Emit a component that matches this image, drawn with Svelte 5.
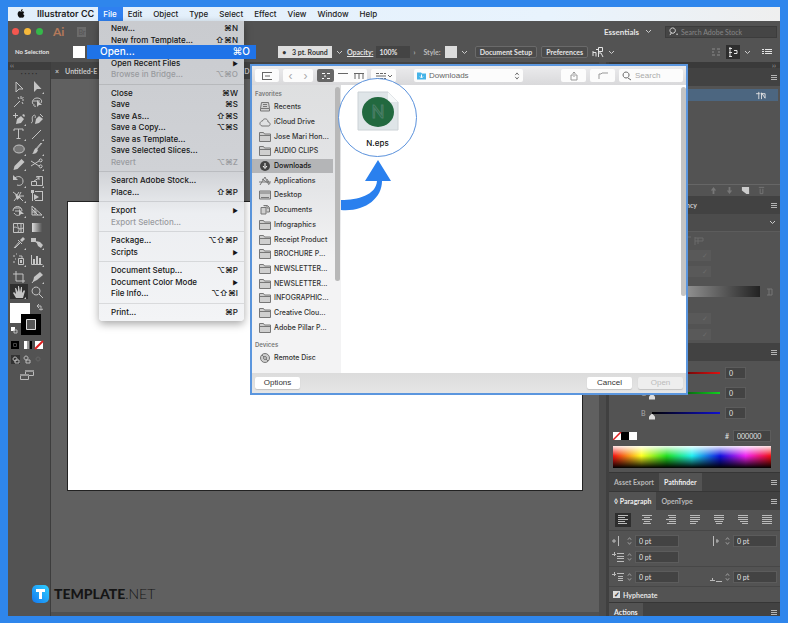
<script>
    let query = "";
    let stock = "";
    let hyphenate = true;
    let folder = "Downloads";

    const menus = ["File", "Edit", "Object", "Type", "Select", "Effect", "View", "Window", "Help"];

    const fileMenu = [
        { label: "New...", keys: "⌘N" },
        { label: "New from Template...", keys: "⇧⌘N" },
        { label: "Open...", keys: "⌘O", active: true },
        { label: "Open Recent Files", sub: true },
        { label: "Browse in Bridge...", keys: "⌥⌘O", off: true },
        null,
        { label: "Close", keys: "⌘W" },
        { label: "Save", keys: "⌘S" },
        { label: "Save As...", keys: "⇧⌘S" },
        { label: "Save a Copy...", keys: "⌥⌘S" },
        { label: "Save as Template..." },
        { label: "Save Selected Slices..." },
        { label: "Revert", keys: "⌥⌘Z", off: true },
        null,
        { label: "Search Adobe Stock..." },
        { label: "Place...", keys: "⇧⌘P" },
        null,
        { label: "Export", sub: true },
        { label: "Export Selection...", off: true },
        null,
        { label: "Package...", keys: "⌥⇧⌘P" },
        { label: "Scripts", sub: true },
        null,
        { label: "Document Setup...", keys: "⌥⌘P" },
        { label: "Document Color Mode", sub: true },
        { label: "File Info...", keys: "⌥⇧⌘I" },
        null,
        { label: "Print...", keys: "⌘P" },
    ];

    // s = stroked path, f = filled path, on a 14x14 grid
    const tools = [
        [
            { name: "Selection", s: "M4 2v10l3-3 4 0z" },
            { name: "Direct selection", f: "M4 1v11l3-3 4.500 0z", more: true },
            { name: "Magic wand", s: "M2 12l6-6M9 1v3M12 5h-2M6 2l1 2M11 9l-1-2M11.500 2l-2 2" },
            { name: "Lasso", s: "M3 9c-2-3 1-6 4-6s6 2 4 5M3 6h7M4 9c-1 2 1 3 2 2", f: "M7 5v7l2-2h3z" },
        ],
        [
            { name: "Pen", f: "M4 12l1-5 4-3 3 3-3 4zM1 3h2V1h1v2h2v1H4v2H3V4H1zM10 3l2-1 1 2-1 1z", more: true },
            { name: "Curvature", f: "M5 12l1-5 3-3 4 3-4 4z", s: "M1 11c3-1 0-5 2-7s3 0 2 2M10 2l3 3" },
            { name: "Type", s: "M2 4V2h9v2M6.500 2v9M4.500 11.500h4", more: true },
            { name: "Line", s: "M2 12L11 3", more: true },
            { name: "Ellipse", s: "M7 3c7 0 7 8 0 8s-7-8 0-8z", g: true, more: true },
            { name: "Paintbrush", s: "M12 1L6 8M11 1L5 8", f: "M6 6l2 2c-1 3-3 4-6 4 2-1 1-4 4-6z", more: true },
            { name: "Pencil", f: "M1.500 13l1-4 7-7 3 3-7 7z", more: true },
            { name: "Scissors", s: "M1 4l8 5M1 9l8-5M10 2a1.500 1.500 0 1 0 2 2 1.500 1.500 0 0 0-2-2M10 8a1.500 1.500 0 1 0 2 2 1.500 1.500 0 0 0-2-2", more: true },
        ],
        [
            { name: "Rotate", s: "M3 4c3-3 8-1 8 3s-3 5-6 4", f: "M1 1v5h5z", more: true },
            { name: "Scale", s: "M1.500 7.500h5v4h-5zM6.500 2.500h6v9h-6M4 7l5-3M6 3h3v3", more: true },
            { name: "Width", s: "M1 3l4 3 2-3M2 12l4-5 5 5M9 3l-2 4 5 0", f: "M3 5l6 3-4 3z", more: true },
            { name: "Free transform", s: "M5 2.500h8M12.500 2v10M5 11.500h8", f: "M1 1h3v3H3v8H2V4H1zM4 5v6l5-3z" },
            { name: "Shape builder", s: "M1 7c0-6 9-6 9 0M2 4h7M2 9c2 3 5 3 6 1M3 7h4", f: "M7 5v7l2-2h3z", more: true },
            { name: "Perspective grid", s: "M2 2v9h10zM2 5l6 6M2 8h5M5 4v7", more: true },
        ],
        [
            { name: "Mesh", s: "M1.500 2.500h10v9h-10zM1 7c4-3 5 3 10 0M6 2c-2 4 3 5 0 9M9 3v8" },
            { name: "Gradient", grad: true },
            { name: "Eyedropper", s: "M8 5l-6 7M6 4l4 4M9 6l-6 6", f: "M8 4l3-3 2 2-3 3z", more: true },
            { name: "Blend", f: "M1 2h5v4H1zM6 5l4 1 3 3-2 3-3-2z", s: "M3 4l6 4", more: true },
        ],
        [
            { name: "Symbol sprayer", s: "M6.500 5.500h5v6h-5zM7 3h3v2M1 3h2M3 6h1M1 9h2M4 1h1", f: "M8 7h2v3H8z", more: true },
            { name: "Column graph", s: "M1.500 2v9.500h11", f: "M3 6h2v5H3zM6 3h2v8H6zM9 5h2v6H9z", more: true },
        ],
        [
            { name: "Artboard", s: "M4 1v10h9M1 4h10v9" },
            { name: "Slice", f: "M3 12l1-5 6-5 3 3-6 5z", s: "M2 13l3-4", more: true },
            { name: "Hand", f: "M4 13L1 8l1-1 2 2-1-6h1l2 4V1h1l1 6 1-5h1v6l2-3 1 1-2 7z", on: true, more: true },
            { name: "Zoom", s: "M6 2a4 4 0 1 0 .1 0M9 9l4 4" },
        ],
    ];

    const favorites = [
        ["recents", "Recents"],
        ["cloud", "iCloud Drive"],
        ["folder", "Jose Mari Hon..."],
        ["folder", "AUDIO CLIPS"],
        ["down", "Downloads"],
        ["apps", "Applications"],
        ["desktop", "Desktop"],
        ["docs", "Documents"],
        ["folder", "Infographics"],
        ["folder", "Receipt Product"],
        ["folder", "BROCHURE P..."],
        ["folder", "NEWSLETTER..."],
        ["folder", "NEWSLETTER..."],
        ["folder", "INFOGRAPHIC..."],
        ["folder", "Creative Clou..."],
        ["folder", "Adobe Pillar P..."],
    ];

    const channels = [
        { id: "R", color: "#e01010", value: 0 },
        { id: "G", color: "#10d020", value: 0 },
        { id: "B", color: "#1010d0", value: 0 },
    ];

    const aligns = [
        "M0 1h10M0 3h7M0 5h10M0 7h7M0 9h9",
        "M0 1h10M2 3h6M0 5h10M2 7h6M1 9h8",
        "M2 1h8M3 3h7M0 5h10M3 7h7M1 9h9",
        "M0 1h10M0 3h10M0 5h10M0 7h8M0 9h6",
        "M0 1h10M0 3h10M0 5h10M1 7h8M2 9h6",
        "M0 1h10M0 3h10M0 5h10M2 7h8M4 9h6",
        "M0 1h10M0 3h10M0 5h10M0 7h10M0 9h10",
    ];
</script>

{#snippet chevron()}
    <svg class="chev" viewBox="0 0 7 5"><path d="M1 1l2.500 2.500L6 1" /></svg>
{/snippet}

{#snippet burger()}
    <button class="burger" aria-label="Panel menu"></button>
{/snippet}

{#snippet sideIcon(kind)}
    <svg class="side-icon" viewBox="0 0 12 10">
        {#if kind === "folder"}
            <path class="tint" d="M.5 9.500v-9h4l1 1.500h6v7.500zM.5 3.500h11" />
        {:else if kind === "recents"}
            <path class="tint" d="M2.500.5h7l1 6V9h-9V6.500zM1.500 6.500h9M4 2.500h4M4 4.500h4" />
        {:else if kind === "cloud"}
            <path d="M3 9h7c2-1 1-4-1-4 0-4-5-4-5.500-1C1 4-.5 8 3 9z" />
        {:else if kind === "down"}
            <circle class="solid" cx="6" cy="5" r="5" /><path class="white" d="M6 2v4M4 5l2 2.500L8 5" />
        {:else if kind === "apps"}
            <path d="M1 9l5-8 4 8M0 6h12M3 3l6 4M8 3l3 5" />
        {:else if kind === "desktop"}
            <path class="tint" d="M.5 1h11v8H.5zM.5 3h11M2 7.500h8" />
        {:else if kind === "docs"}
            <path class="tint" d="M2 2.500h5V9H2zM4.500.5h4l2 2V7h-3M8 1v2h2" />
        {:else}
            <circle class="tint" cx="6" cy="5" r="4.500" /><circle cx="6" cy="5" r="1.500" /><path d="M3 2l2 2M7 6l2 2" />
        {/if}
    </svg>
{/snippet}

{#snippet measure(icon, label)}
    <label class="measure">
        <svg class="measure-icon" viewBox="0 0 12 10"><path d={icon} /></svg>
        <svg class="step" viewBox="0 0 6 10"><path d="M1 3.500L3 1l2 2.500M1 6.500L3 9l2-2.500" /></svg>
        <input class="field" aria-label={label} value="0 pt" />
    </label>
{/snippet}

<div class="frame">
    <nav class="menubar">
        <svg class="apple" viewBox="0 0 10 11">
            <path d="M7 0C5.500.2 4.800 1.300 5 2.600 6.300 2.600 7.200 1.300 7 0zM5 3.200C3.800 2.600 2.800 2.500 1.800 3.300 0 5 .8 9 2.800 10.600c.8.5 1.500-.2 2.400-.2s1.600.7 2.400.2c.8-.6 1.500-1.800 1.700-2.600C7.500 7 7.600 4.800 9 4 8 2.600 6.500 2.600 5 3.200z" />
        </svg>
        <button class="app-name">Illustrator CC</button>
        {#each menus as m}
            <button class:open={m === "File"}>{m}</button>
        {/each}
    </nav>

    <header class="titlebar">
        <button class="light red" aria-label="Close window"></button>
        <button class="light yellow" aria-label="Minimise"></button>
        <button class="light green" aria-label="Zoom window"></button>
        <span class="ai">Ai</span>
        <span class="bridge">Br</span>
        <button class="workspace">Essentials {@render chevron()}</button>
        <label class="stock">
            <svg viewBox="0 0 10 10"><path d="M4 1a3 3 0 1 0 .1 0M3 6L1 9M8 8h2" /></svg>
            <input placeholder="Search Adobe Stock" aria-label="Search Adobe Stock" bind:value={stock} />
        </label>
    </header>

    <div class="controlbar">
        <span class="state">No Selection</span>
        <button class="chip" aria-label="Fill"></button>
        <div class="options">
            <button class="brush"><i>•</i> 3 pt. Round</button>
            {@render chevron()}
            <label class="opacity"><u>Opacity:</u> <input value="100%" /><b>›</b></label>
            <span class="style-label">Style:</span>
            <button class="chip grey" aria-label="Graphic style"></button>
            {@render chevron()}
            <button class="outline setup">Document Setup</button>
            <button class="outline">Preferences</button>
            <svg class="bar-icon" viewBox="0 0 12 12"><path d="M1 5v5M1 6.500h3v4M6.500 11V1.500h4v4h-4M7 7h2l2 4M4 3.500h2" /></svg>
            {@render chevron()}
        </div>
        <div class="arrange">
            <svg class="bar-icon dim" viewBox="0 0 12 12"><path d="M2 3h3M7 3h3M2 6h2M8 6h2M2 9h3M7 9h3" /></svg>
            <button class="snap" aria-label="Snap"><svg viewBox="0 0 12 12"><path d="M3 1v10M2 2.500h3M2 6.500h3M2 10.500h3M7 4.500h3v3H7" /></svg></button>
            {@render chevron()}
            <svg class="bar-icon list" viewBox="0 0 12 12"><path d="M1 3.500h2M4 3.500h7M1 5.500h2M4 5.500h7M1 7.500h2M4 7.500h7" /></svg>
        </div>
    </div>

    <div class="workarea">
        <aside class="toolbar">
            <div class="grip">‹‹</div>
            <div class="dots">· · · · ·</div>
            {#each tools as group}
                <div class="group">
                    {#each group as t}
                        <button class="tool" class:on={t.on} aria-label={t.name}>
                            {#if t.grad}
                                <span class="grad"></span>
                            {:else}
                                <svg viewBox="0 0 14 14">
                                    {#if t.s}<path class="s" class:g={t.g} d={t.s} />{/if}
                                    {#if t.f}<path class="f" d={t.f} />{/if}
                                    {#if t.more}<path class="f" d="M14 12v2h-2z" />{/if}
                                </svg>
                            {/if}
                        </button>
                    {/each}
                </div>
            {/each}
            <svg class="paint" viewBox="0 0 38 84">
                <path class="white" d="M1 2h20v20H1z" />
                <path class="black" d="M12 13h20v21H12z" />
                <path class="inner" d="M17.500 18.500h9v10h-9z" />
                <path class="line" d="M28 5h4v4M28 5l2-2M28 5l2 2M32 9l-2-1M32 9l2-1" />
                <path class="white" d="M2 26h4v4H2z" /><path class="line" d="M5 29h3v3H5z" />
                <path class="black" d="M2 40h8v8H2z" /><path class="hole" d="M4.500 42.500h3v3h-3z" />
                <path class="white" d="M15 40h3v8h-3z" /><path class="mid" d="M18 40h2v8h-2z" /><path class="black" d="M21 40h2v8h-2z" />
                <path class="white" d="M26 40h8v8h-8z" /><path class="none" d="M26 48l8-8" />
                <path class="dark" d="M2 54h9v9H2z" />
                <path class="line" d="M6 56a2 2 0 1 0 .1 0M6 59h4v3H6zM17 55a2 2 0 1 0 .1 0M17 59h4v3h-4z" />
                <path class="faint" d="M29 56a2 2 0 1 0 .1 0" />
                <path class="line" d="M11.500 73.500h8v5h-8zM16.500 73v-3.500h8v5h-5" />
                <path class="mid" d="M16 69h9v2h-9zM11 73h9v2h-9z" />
            </svg>
        </aside>

        <main class="document">
            <div class="tabs"><button>×</button><span>Untitled-E</span><span class="second">D</span></div>
            <div class="canvas"><div class="artboard"></div></div>
            <div class="status"></div>
        </main>
        <div class="scroll"></div>

        <aside class="dock">
            <div class="strip">››</div>
            <section class="layers">
                <div class="head">{@render burger()}</div>
                <div class="layer"><svg viewBox="0 0 12 10"><path d="M0 3h4M3 1v8M6 9V2l4 6V3M5 3h5" /></svg></div>
                <div class="layer-tools">
                    <svg viewBox="0 0 10 10"><path class="up" d="M5 1l3 4H6v4H4V5H2z" /></svg>
                    <svg viewBox="0 0 10 10"><path class="up" d="M5 9l3-4H6V1H4v4H2z" /></svg>
                    <svg viewBox="0 0 10 10"><path class="new" d="M1 1h8v8H6L1 5z" /></svg>
                    <svg viewBox="0 0 10 10"><path d="M2 1.500h6M3.500 3v5.500h3V3" /></svg>
                </div>
            </section>

            <section class="gradient-panel">
                <div class="head"><span class="transparency">Transparency</span>{@render burger()}</div>
                <div class="combo">{@render chevron()}</div>
                <svg class="ghost-icons" viewBox="0 0 30 12"><path d="M2 2v8M2 2h6M12 2v8M12 3h8v3h-8M15 3v6" /></svg>
                <div class="ghost">✓</div>
                <div class="ghost">✓</div>
                <div class="ramp-row"><div class="ramp"></div><svg viewBox="0 0 8 8"><path d="M1 1h5v6H1M3 1v6" /></svg></div>
                <div class="ghost">✓</div>
                <div class="ghost">✓</div>
            </section>

            <section class="color">
                <div class="head">{@render burger()}</div>
                <div class="channels">
                    {#each channels as c}
                        <div class="channel">
                            <label for={"ch" + c.id}>{c.id}</label>
                            <div class="slider">
                                <div class="rail" style="background: linear-gradient(90deg, #000, {c.color})"></div>
                                <input type="range" min="0" max="255" value={c.value} aria-label={c.id} />
                            </div>
                            <input class="field" id={"ch" + c.id} value={c.value} />
                        </div>
                    {/each}
                </div>
                <div class="hex">
                    <svg viewBox="0 0 24 8"><path fill="#fff" d="M0 0h8v8H0zM16 0h8v8h-8z" /><path fill="#000" d="M8 0h8v8H8z" /><path stroke="#e02020" stroke-width="1.500" d="M0 8l8-8" /></svg>
                    <label for="hex">#</label>
                    <input class="field" id="hex" value="000000" />
                </div>
                <div class="spectrum"></div>
            </section>

            <section>
                <div class="head tabbed">
                    <button>Asset Export</button><button class="current">Pathfinder</button>{@render burger()}
                </div>
            </section>

            <section class="paragraph">
                <div class="head tabbed">
                    <button class="current">◊ Paragraph</button><button>OpenType</button>{@render burger()}
                </div>
                <div class="aligns">
                    {#each aligns as d, i}
                        <button class:on={i === 0} aria-label={"Alignment " + (i + 1)}>
                            <svg viewBox="0 .5 10 10"><path {d} /></svg>
                        </button>
                    {/each}
                </div>
                <div class="measures">
                    {@render measure("M6.500 0v10M0 5h4M2 3v4", "Left indent")}
                    {@render measure("M3.500 0v10M9 5H6M7 3v4", "Right indent")}
                    {@render measure("M0 2.500h4M2.500 0v4M5 1.500h7M5 4.500h7M5 6.500h7M5 9.500h7", "First-line indent")}
                </div>
                <div class="measures">
                    {@render measure("M0 2.500h4M2.500 0v4M5 1.500h7M6 4.500h5M6 6.500h5M6 8.500h5", "Space before")}
                    {@render measure("M0 8.500h5M2.500 6v3M6 9.500h6", "Space after")}
                </div>
                <label class="hyphen"><input type="checkbox" bind:checked={hyphenate} /> Hyphenate</label>
            </section>

            <section>
                <div class="head tabbed"><button class="current">Actions</button>{@render burger()}</div>
            </section>
        </aside>
    </div>

    <ul class="file-menu">
        {#each fileMenu as item}
            {#if item}
                <li>
                    <button class:active={item.active} disabled={item.off}>
                        <span>{item.label}</span>
                        <span class:arrowhead={item.sub}>{item.sub ? "▶" : (item.keys ?? "")}</span>
                    </button>
                </li>
            {:else}
                <li class="sep"></li>
            {/if}
        {/each}
    </ul>

    <section class="dialog">
        <div class="finder-bar">
            <button class="pane" aria-label="Toggle sidebar"><svg viewBox="0 0 12 10"><path d="M1 1.500h10M1 8.500h10M1.500 1v8M4 5h5" /></svg></button>
            <div class="pair"><button>‹</button><button>›</button></div>
            <div class="views">
                <button class="on" aria-label="Icons"><svg viewBox="0 0 12 10"><path d="M2 2.500h3M7 2.500h3M4 5h2M2 7.500h2M7 7.500h3" /></svg></button>
                <button aria-label="List"><svg viewBox="0 0 12 10"><path d="M1 2.500h10" /></svg></button>
                <button aria-label="Columns"><svg viewBox="0 0 12 10"><path d="M1 2.500h10M2 2v6M6 2v6M10 2v6" /></svg></button>
            </div>
            <button class="arrange-by" aria-label="Group"><svg viewBox="0 0 18 10"><path d="M1 2.500h3M5 2.500h3M9 2.500h2M1 5h10M1 7.500h3M5 7.500h3M9 7.500h2M13 4l2 2 2-2" /></svg></button>
            <label class="where">
                <svg viewBox="0 0 9 9"><path class="blue" d="M0 1h4l1 1h4v6H0z" /><path class="mark" d="M4.500 3v3M3 5l1.500 1.500L6 5" /></svg>
                <select bind:value={folder} aria-label="Folder"><option>Downloads</option></select>
                <svg class="updown" viewBox="0 0 6 9"><path d="M1 3.500L3 1l2 2.500M1 5.500L3 8l2-2.500" /></svg>
            </label>
            <button class="act" aria-label="Share"><svg viewBox="0 0 12 10"><path d="M3 4v5h6V4H7M3 4h2M6 6V1M4.500 2.500L6 1l1.500 1.500" /></svg></button>
            <button class="act" aria-label="New folder"><svg viewBox="0 0 12 10"><path d="M2 8V3h2l1-1h6" /></svg></button>
            <label class="search">
                <svg viewBox="0 0 10 10"><path d="M4 1a3 3 0 1 0 .1 0M6 7l3 2" /></svg>
                <input placeholder="Search" aria-label="Search" bind:value={query} />
            </label>
        </div>

        <div class="finder">
            <div class="sidebar">
                <h2>Favorites</h2>
                <ul class="favorites">
                    {#each favorites as [kind, name]}
                        <li class:on={name === folder}>{@render sideIcon(kind)}<button>{name}</button></li>
                    {/each}
                </ul>
                <h2 class="devices">Devices</h2>
                <ul><li class="disc">{@render sideIcon("disc")}<button>Remote Disc</button></li></ul>
                <div class="thumb"></div>
            </div>
            <div class="files"><div class="thumb"></div></div>
        </div>

        <div class="actions">
            <button>Options</button>
            <button class="cancel">Cancel</button>
            <button disabled>Open</button>
        </div>

        <svg class="arrow" viewBox="0 0 50 52">
            <path d="M37 0L50 21H41C41 39 23 52 0 50V40C17 40 35 35 36 21H24z" />
        </svg>
        <button class="file">
            <svg viewBox="0 0 42 40">
                <path class="sheet" d="M1 1h30l10 10v28H1z" />
                <path class="fold" d="M31 1v10h10z" />
                <ellipse cx="21" cy="21" rx="16" ry="15" />
                <text x="21" y="27">N</text>
            </svg>
            <span>N.eps</span>
        </button>
    </section>

    <div class="brand">
        <svg viewBox="0 0 17 18">
            <defs><linearGradient id="sky" x1="1" y1="0" x2="0" y2="1"><stop stop-color="#2fd0ff" /><stop offset="1" stop-color="#1478f0" /></linearGradient></defs>
            <rect width="17" height="18" rx="5" fill="url(#sky)" />
            <path d="M4 4h9v3h-3v7H7V7H4z" fill="#fff" />
        </svg>
        <span><b>TEMPLATE</b>.NET</span>
    </div>
</div>

<style>
    :global(body) {
        margin: 0;
    }
    .frame {
        position: relative;
        display: flex;
        flex-direction: column;
        box-sizing: border-box;
        height: 100vh;
        overflow: hidden;
        border: solid #2f86ec;
        border-width: 7px 8px;
        background: #535353;
        color: #e4e4e4;
        font: 7px/10px Lato, sans-serif;
    }
    .frame * {
        box-sizing: border-box;
    }
    button,
    input,
    select {
        margin: 0;
        padding: 0;
        border: 0;
        background: none;
        color: inherit;
        font: inherit;
        outline: none;
        appearance: none;
        min-width: 0;
    }
    button {
        white-space: nowrap;
    }
    ul {
        margin: 0;
        padding: 0;
        list-style: none;
    }
    svg {
        display: block;
        fill: none;
        stroke: currentColor;
        flex: none;
    }
    .chev {
        width: 7px;
        height: 5px;
        stroke: #ccc;
    }

    /* menu bar */
    .menubar {
        display: flex;
        align-items: stretch;
        flex: none;
        height: 14px;
        background: linear-gradient(90deg, #e2effb, #e8f3fd 70%, #efefef);
        color: #222;
        font: 500 8px/14px Inter, sans-serif;
    }
    .apple {
        width: 8px;
        height: 9px;
        margin: 2px 12px 0 9px;
        fill: #111;
        stroke: none;
    }
    .menubar button {
        padding: 0 6px 0 5px;
    }
    .menubar .app-name {
        padding: 0 4px 0 0;
        font-size: 9px;
        font-weight: 600;
    }
    .menubar .open {
        background: #2f80f0;
        color: #fff;
    }

    /* title and control bars */
    .titlebar {
        display: flex;
        align-items: center;
        flex: none;
        height: 21px;
        padding: 0 3px 0 4px;
        gap: 5px;
    }
    .light {
        width: 7px;
        height: 7px;
        border-radius: 50%;
    }
    .red {
        background: #f4574f;
    }
    .yellow {
        background: #f6b93b;
    }
    .green {
        background: #35b84a;
    }
    .ai {
        margin-left: 5px;
        color: #b4795a;
        font: 700 12px/16px Lato, sans-serif;
    }
    .bridge {
        margin-left: 8px;
        padding: 0 1px;
        background: #6b6b6b;
        color: #555;
    }
    .workspace {
        display: flex;
        align-items: center;
        gap: 6px;
        margin-left: auto;
        font: 700 8px/12px Lato, sans-serif;
    }
    .stock {
        display: flex;
        align-items: center;
        width: 112px;
        height: 12px;
        margin-left: 8px;
        padding: 0 3px;
        gap: 3px;
        border: 1px solid #3c3c3c;
        background: #454545;
    }
    .stock svg {
        width: 9px;
        height: 9px;
    }
    .stock input {
        flex: 1;
    }
    .stock input::placeholder {
        color: #858585;
        opacity: 1;
    }
    .controlbar {
        display: flex;
        align-items: center;
        flex: none;
        height: 20px;
        padding: 0 7px;
        font-weight: 700;
    }
    .state {
        width: 58px;
        font-size: 6px;
    }
    .chip {
        width: 12px;
        height: 12px;
        background: #fff;
    }
    .chip.grey {
        background: #dcdcdc;
    }
    .options {
        display: flex;
        align-items: center;
        flex: 1;
        gap: 4px;
        margin-left: 193px;
    }
    .brush {
        width: 54px;
        height: 12px;
        background: #dedede;
        color: #333;
        font-weight: 700;
    }
    .brush i {
        margin-right: 4px;
        font-style: normal;
    }
    .opacity {
        display: flex;
        align-items: center;
        gap: 3px;
    }
    .opacity input {
        width: 34px;
        height: 12px;
        padding-left: 3px;
        background: #444;
    }
    .opacity b {
        width: 6px;
        color: #aaa;
    }
    .style-label {
        color: #bbb;
    }
    .outline {
        height: 12px;
        padding: 0 4px;
        border: 1px solid #6a6a6a;
        border-radius: 2px;
        background: #4b4b4b;
        font-weight: 700;
        line-height: 10px;
    }
    .setup {
        margin-left: 3px;
    }
    .bar-icon {
        width: 12px;
        height: 12px;
    }
    .dim {
        opacity: 0.4;
    }
    .arrange {
        display: flex;
        align-items: center;
        gap: 4px;
    }
    .snap {
        width: 14px;
        height: 14px;
        padding: 1px;
        background: #2e2e2e;
    }
    .list {
        margin-left: 6px;
    }

    /* work area */
    .workarea {
        display: flex;
        flex: 1;
        min-height: 0;
    }
    .toolbar {
        flex: none;
        width: 43px;
        border-right: 1px solid #3d3d3d;
    }
    .grip {
        height: 8px;
        padding-left: 2px;
        background: #3e3e3e;
        color: #aaa;
        line-height: 6px;
    }
    .dots {
        height: 9px;
        text-align: center;
        color: #222;
        line-height: 6px;
    }
    .group {
        display: grid;
        grid-template-columns: 18px 18px;
        grid-auto-rows: 15px;
        padding: 0 0 2px 2px;
    }
    .tool {
        display: flex;
        align-items: center;
        justify-content: center;
    }
    .tool svg {
        width: 14px;
        height: 14px;
    }
    .tool.on {
        background: #2f2f2f;
    }
    .s {
        stroke: #c4c4c4;
    }
    .s.g {
        fill: #777;
    }
    .f {
        fill: #c4c4c4;
        stroke: none;
    }
    .grad {
        width: 10px;
        height: 9px;
        background: linear-gradient(90deg, #ddd, #555);
    }
    .paint {
        width: 38px;
        height: 84px;
        margin-left: 1px;
    }
    .paint path {
        stroke: none;
    }
    .paint .white {
        fill: #fff;
    }
    .paint .black {
        fill: #000;
    }
    .paint .mid {
        fill: #999;
    }
    .paint .dark {
        fill: #333;
    }
    .paint .inner {
        fill: #555;
        stroke: #ddd;
    }
    .paint .hole {
        stroke: #444;
    }
    .paint .line {
        stroke: #bbb;
    }
    .paint .none {
        stroke: #e02020;
        stroke-width: 2;
    }
    .paint .faint {
        stroke: #666;
    }
    .document {
        display: flex;
        flex-direction: column;
        flex: 1;
        min-width: 0;
        background: #606060;
    }
    .tabs {
        display: flex;
        align-items: center;
        gap: 6px;
        height: 17px;
        padding-left: 4px;
        background: #434343;
        color: #c8c8c8;
        font-weight: 700;
    }
    .second {
        margin-left: 141px;
    }
    .canvas {
        flex: 1;
        padding: 122px 16px 0 16px;
    }
    .artboard {
        height: 290px;
        border: 1px solid #222;
        background: #fff;
    }
    .status {
        height: 4px;
        background: #505050;
    }
    .scroll {
        width: 10px;
        border-right: 3px solid #404040;
        background: #4c4c4c;
    }

    /* dock */
    .dock {
        flex: none;
        width: 171px;
        background: #535353;
    }
    .strip {
        height: 6px;
        padding-right: 4px;
        background: #3a3a3a;
        text-align: right;
        line-height: 6px;
        color: #aaa;
    }
    .head {
        display: flex;
        align-items: center;
        height: 18px;
        background: #424242;
    }
    .burger {
        width: 6px;
        height: 5px;
        margin: 0 3px 0 auto;
        border: solid #b5b5b5;
        border-width: 1px 0;
        background: linear-gradient(#b5b5b5, #b5b5b5) center / 6px 1px no-repeat;
    }
    .layers {
        display: flex;
        flex-direction: column;
        height: 128px;
    }
    .layer {
        display: flex;
        justify-content: flex-end;
        align-items: center;
        height: 12px;
        margin: 3px 2px 0 0;
        padding-right: 11px;
        background: #4c6680;
    }
    .layer svg {
        width: 11px;
        height: 9px;
    }
    .layer-tools {
        display: flex;
        justify-content: flex-end;
        align-items: center;
        gap: 7px;
        height: 12px;
        margin-top: auto;
        padding-right: 14px;
        border-top: 1px solid #666;
        color: #777;
    }
    .layer-tools svg {
        width: 9px;
        height: 9px;
    }
    .layer-tools .new,
    .layer-tools .up {
        fill: #ccc;
        stroke: none;
    }
    .layer-tools .up {
        fill: #777;
    }
    .gradient-panel {
        height: 147px;
        color: #c8c8c8;
    }
    .transparency {
        width: 88px;
        text-align: right;
        font-weight: 700;
    }
    .combo {
        display: flex;
        justify-content: flex-end;
        align-items: center;
        height: 18px;
        padding-right: 4px;
        border-bottom: 1px solid #5c5c5c;
        background: #4c4c4c;
    }
    .ghost-icons {
        width: 30px;
        height: 12px;
        margin: 3px 0 3px 74px;
        stroke: #6a6a6a;
    }
    .ghost {
        width: 36px;
        height: 11px;
        margin: 0 0 5px 66px;
        padding-right: 3px;
        background: #595959;
        color: #6b6b6b;
        text-align: right;
    }
    .ramp-row {
        display: flex;
        align-items: center;
        justify-content: space-between;
        margin: 9px 6px 16px 4px;
    }
    .ramp {
        width: 147px;
        height: 11px;
        background: linear-gradient(90deg, #fff, #222);
    }
    .ramp-row svg {
        width: 8px;
        height: 8px;
        stroke: #777;
    }
    .channels {
        padding-top: 2px;
    }
    .channel {
        display: flex;
        align-items: center;
        height: 20px;
        padding-left: 32px;
    }
    .channel label {
        width: 11px;
        color: #aaa;
    }
    .slider {
        position: relative;
        width: 68px;
        margin-right: 5px;
    }
    .rail {
        height: 2px;
    }
    .slider input {
        position: absolute;
        inset: 1px 0 auto -3px;
        height: 7px;
    }
    .slider input::-webkit-slider-thumb {
        appearance: none;
        width: 6px;
        height: 6px;
        background: #ddd;
        clip-path: polygon(50% 0, 100% 50%, 100% 100%, 0 100%, 0 50%);
    }
    .field {
        height: 12px;
        padding: 0 3px;
        border: 1px solid #5c5c5c;
        background: #434343;
        color: #e4e4e4;
    }
    .channel .field {
        width: 21px;
    }
    .color {
        height: 129px;
    }
    .hex {
        display: flex;
        align-items: center;
        padding: 7px 9px 0 4px;
    }
    .hex svg {
        width: 24px;
        height: 8px;
        stroke: none;
    }
    .hex label {
        margin: 0 4px 0 auto;
    }
    .hex .field {
        width: 38px;
    }
    .spectrum {
        height: 22px;
        margin: 4px 9px 0 4px;
        background:
            linear-gradient(rgba(255, 255, 255, 0.9), rgba(255, 255, 255, 0) 45%, rgba(0, 0, 0, 0) 45%, #000),
            linear-gradient(90deg, #f01010, #ffff20 18%, #20e020 34%, #20f0f0 50%, #1010e0 68%, #f020f0 84%, #f01010);
    }
    .tabbed {
        height: 19px;
        align-items: stretch;
        border-top: 1px solid #363636;
        color: #b8b8b8;
    }
    .tabbed button:not(.burger) {
        padding: 0 5px;
        font-weight: 700;
    }
    .tabbed .current {
        background: #535353;
        color: #eee;
    }
    .tabbed .burger {
        align-self: center;
    }
    .aligns {
        display: flex;
        justify-content: space-between;
        height: 21px;
        padding: 3px 5px 3px 6px;
        border-bottom: 1px solid #474747;
    }
    .aligns button {
        display: grid;
        place-items: center;
        width: 16px;
        height: 14px;
    }
    .aligns .on {
        background: #2e2e2e;
    }
    .aligns svg {
        width: 10px;
        height: 10px;
        stroke: #bbb;
    }
    .measures {
        display: flex;
        flex-wrap: wrap;
        justify-content: space-between;
        gap: 4px 28px;
        padding: 4px 3px 3px;
        border-bottom: 1px solid #474747;
    }
    .measure {
        display: flex;
        align-items: center;
        gap: 3px;
    }
    .measure-icon {
        width: 12px;
        height: 10px;
        stroke: #bbb;
    }
    .step {
        width: 5px;
        height: 10px;
        stroke: #aaa;
    }
    .measure .field {
        width: 44px;
    }
    .hyphen {
        display: flex;
        align-items: center;
        gap: 3px;
        height: 15px;
        padding-left: 4px;
        font-weight: 700;
    }
    .hyphen input {
        width: 7px;
        height: 7px;
        background: #ddd;
    }
    .hyphen input:checked::before {
        content: "✓";
        display: block;
        color: #333;
        line-height: 7px;
        text-align: center;
    }

    /* File menu */
    .file-menu {
        position: absolute;
        left: 91px;
        top: 14px;
        display: flex;
        flex-direction: column;
        width: 145px;
        min-height: 300px;
        padding: 2px 0 3px;
        border-radius: 0 0 4px 4px;
        background: linear-gradient(#c9cbcf, #d0d2d6 50%, #eceef1 64%, #f3f4f6);
        box-shadow: 0 3px 8px rgba(0, 0, 0, 0.35);
        color: #151515;
        font: 500 8px/11px Inter, "DejaVu Sans", sans-serif;
        z-index: 3;
    }
    .file-menu li {
        display: flex;
        position: relative;
        flex: 1 0 0;
        min-height: 11px;
    }
    .file-menu .sep {
        flex: none;
        min-height: 0;
        height: 7px;
    }
    .file-menu .sep::after {
        content: "";
        width: 100%;
        height: 1px;
        margin-top: 3px;
        background: rgba(0, 0, 0, 0.1);
    }
    .file-menu button {
        display: flex;
        justify-content: space-between;
        align-items: center;
        flex: 1;
        padding: 0 6px 0 12px;
    }
    .file-menu button:disabled {
        color: #999b9f;
    }
    .file-menu .active {
        position: absolute;
        inset: -1px -12px;
        padding: 0 6px 0 13px;
        background: #1f73e8;
        color: #fff;
        font-size: 10px;
    }
    .arrowhead {
        font-size: 6px;
    }

    /* Open dialog */
    .dialog {
        position: absolute;
        left: 242px;
        top: 57px;
        display: flex;
        flex-direction: column;
        width: 438px;
        height: 331px;
        border: 2px solid #5b96de;
        background: #fff;
        color: #333;
        font: 8px/10px "Liberation Sans", sans-serif;
        z-index: 2;
    }
    .finder-bar {
        display: flex;
        align-items: center;
        height: 19px;
        padding: 0 3px;
        background: linear-gradient(#ebebed, #d9d9db);
        color: #666;
    }
    .finder-bar svg {
        height: 10px;
    }
    .finder-bar > *,
    .pair button,
    .views button {
        height: 13px;
        border-radius: 2px;
        background: #fcfcfc;
        display: grid;
        place-items: center;
    }
    .pane {
        width: 24px;
    }
    .pair {
        grid-template-columns: 15px 15px;
        margin: 0 4px;
        color: #aaa;
        font-size: 12px;
    }
    .views {
        grid-template-columns: 17px 17px 16px;
    }
    .views .on {
        width: 100%;
        background: #666;
        color: #fff;
    }
    .arrange-by {
        width: 25px;
        margin-left: 4px;
    }
    .finder-bar .where,
    .finder-bar .search {
        display: flex;
        align-items: center;
        gap: 3px;
        padding: 0 3px;
    }
    .where {
        flex: 1;
        margin: 0 38px 0 18px;
    }
    .where select {
        flex: 1;
        height: 12px;
    }
    .where svg {
        width: 9px;
    }
    .blue {
        fill: #45b3e8;
        stroke: none;
    }
    .mark {
        stroke: #fff;
    }
    .where .updown {
        width: 6px;
        height: 8px;
    }
    .act {
        width: 25px;
        margin-right: 4px;
    }
    .act svg {
        stroke: #999;
    }
    .search {
        width: 64px;
    }
    .search input {
        flex: 1;
    }
    .search input::placeholder {
        color: #aaa;
        opacity: 1;
    }
    .finder {
        display: flex;
        flex: 1;
        min-height: 0;
    }
    .sidebar {
        position: relative;
        display: flex;
        flex-direction: column;
        width: 89px;
        padding: 3px 0 8px;
        background: linear-gradient(#dedfe0, #e4e5e7 35%, #f3f3f4 60%);
        font: 500 7px/10px Inter, sans-serif;
    }
    h2 {
        margin: 0;
        padding-left: 3px;
        color: #777;
        font: 600 6px/12px Inter, sans-serif;
    }
    .devices {
        margin-top: 4px;
    }
    .favorites {
        display: flex;
        flex-direction: column;
        flex: 1;
    }
    .sidebar li {
        display: flex;
        align-items: center;
        flex: 1;
        gap: 3px;
        margin-right: 8px;
        padding-left: 7px;
    }
    .sidebar .on {
        background: #b4b5b7;
        color: #111;
    }
    .sidebar .disc {
        height: 14px;
    }
    .side-icon {
        width: 12px;
        height: 10px;
        stroke: #777;
    }
    .tint {
        fill: #cfcfcf;
    }
    .solid {
        fill: #444;
        stroke: none;
    }
    .side-icon .white {
        stroke: #fff;
    }
    .thumb {
        position: absolute;
        top: 2px;
        right: 1px;
        width: 5px;
        height: 194px;
        border-radius: 3px;
        background: #b8b8b8;
    }
    .files {
        position: relative;
        flex: 1;
        background: #fff;
    }
    .files .thumb {
        height: 209px;
        right: 0;
        background: #c4c4c4;
    }
    .actions {
        display: flex;
        align-items: center;
        gap: 6px;
        height: 20px;
        padding: 0 3px;
        background: linear-gradient(#dcdcdc, #e6e6e6);
    }
    .actions button {
        width: 45px;
        height: 12px;
        border-radius: 2px;
        background: #fff;
        box-shadow: 0 1px 1px rgba(0, 0, 0, 0.15);
    }
    .actions .cancel {
        margin-left: auto;
    }
    .actions button:disabled {
        background: #eee;
        color: #bbb;
    }
    .file {
        position: absolute;
        left: 86px;
        top: 12px;
        display: flex;
        flex-direction: column;
        align-items: center;
        width: 79px;
        height: 79px;
        padding-top: 12px;
        gap: 7px;
        border: 1px solid #5b92dc;
        border-radius: 50%;
        background: #fff;
        color: #111;
        font: 500 8px/10px Inter, sans-serif;
    }
    .file svg {
        width: 42px;
        height: 40px;
    }
    .sheet {
        fill: #dfe5e8;
        stroke: #ccd2d6;
    }
    .fold {
        fill: #f6f8f9;
        stroke: none;
    }
    ellipse {
        fill: #22693f;
        stroke: none;
    }
    text {
        fill: none;
        stroke: #4c7f68;
        font: 400 17px Lato, sans-serif;
        text-anchor: middle;
    }
    .arrow {
        position: absolute;
        left: 89px;
        top: 94px;
        width: 50px;
        height: 52px;
        fill: #2a80ee;
        stroke: none;
    }

    .brand {
        position: absolute;
        left: 24px;
        bottom: 13px;
        display: flex;
        align-items: center;
        gap: 5px;
        color: #151515;
        font: 300 14px/18px Lato, sans-serif;
    }
    .brand svg {
        width: 17px;
        height: 18px;
        stroke: none;
    }
    .brand b {
        font-weight: 900;
    }
</style>
